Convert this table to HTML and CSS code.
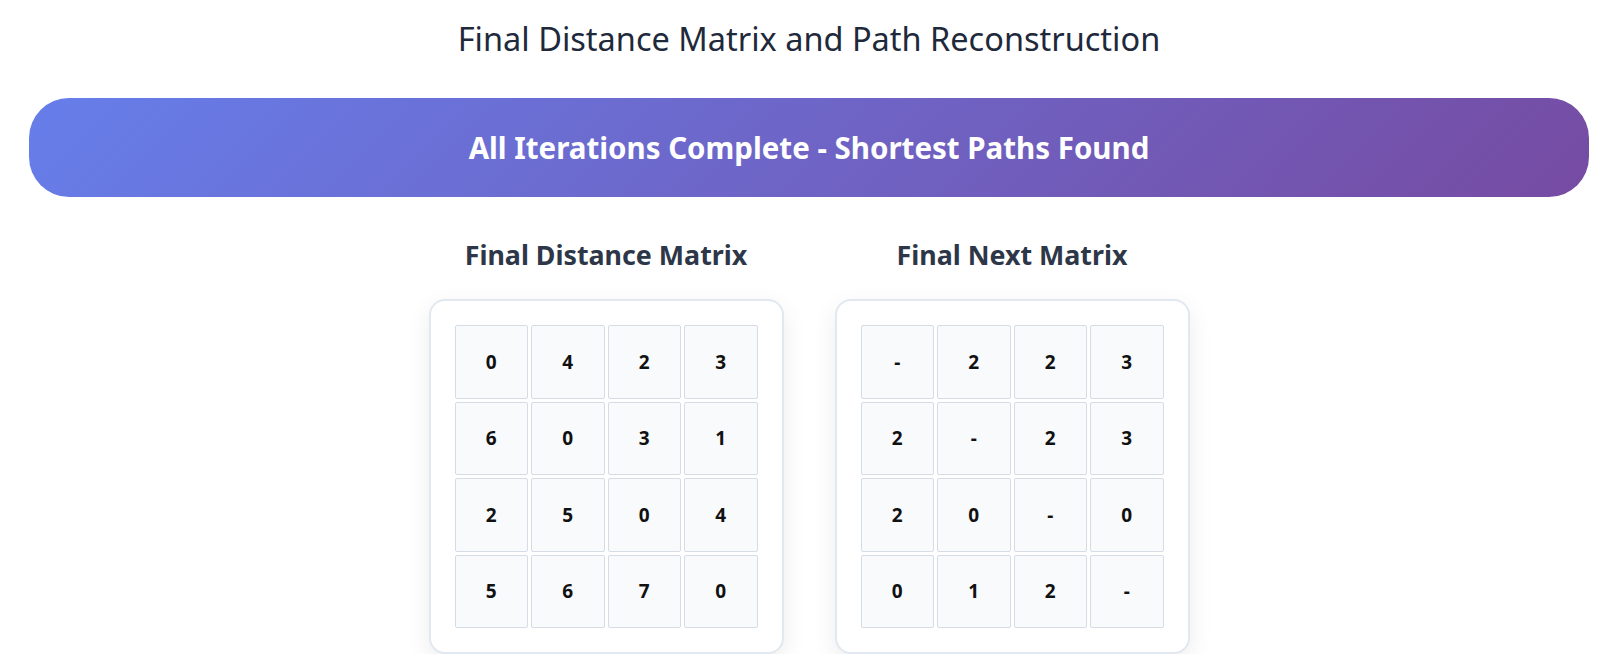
FILE: index.html
```html
<!DOCTYPE html>
<html lang="en">
<head>
    <meta charset="UTF-8">
    <meta name="viewport" content="width=device-width, initial-scale=1.0">
    <title>Final Distance Matrix and Path Reconstruction</title>
    <link rel="stylesheet" href="styles.css">
</head>
<body>
    <div class="page">
        <h1 class="page-title">Final Distance Matrix and Path Reconstruction</h1>

        <div class="status-banner">All Iterations Complete - Shortest Paths Found</div>

        <div class="matrices">
            <div class="matrix-block">
                <h3>Final Distance Matrix</h3>
                <div class="matrix-card">
                    <div class="matrix-grid">
                        <div class="cell">0</div>
                        <div class="cell">4</div>
                        <div class="cell">2</div>
                        <div class="cell">3</div>
                        <div class="cell">6</div>
                        <div class="cell">0</div>
                        <div class="cell">3</div>
                        <div class="cell">1</div>
                        <div class="cell">2</div>
                        <div class="cell">5</div>
                        <div class="cell">0</div>
                        <div class="cell">4</div>
                        <div class="cell">5</div>
                        <div class="cell">6</div>
                        <div class="cell">7</div>
                        <div class="cell">0</div>
                    </div>
                </div>
            </div>

            <div class="matrix-block">
                <h3>Final Next Matrix</h3>
                <div class="matrix-card">
                    <div class="matrix-grid">
                        <div class="cell">-</div>
                        <div class="cell">2</div>
                        <div class="cell">2</div>
                        <div class="cell">3</div>
                        <div class="cell">2</div>
                        <div class="cell">-</div>
                        <div class="cell">2</div>
                        <div class="cell">3</div>
                        <div class="cell">2</div>
                        <div class="cell">0</div>
                        <div class="cell">-</div>
                        <div class="cell">0</div>
                        <div class="cell">0</div>
                        <div class="cell">1</div>
                        <div class="cell">2</div>
                        <div class="cell">-</div>
                    </div>
                </div>
            </div>
        </div>
    </div>
</body>
</html>
```
FILE: styles.css
```css
body {
    margin: 0;
    font-family: "Noto Sans", "Open Sans", sans-serif;
    background: #ffffff;
    color: #2d3748;
}
.page {
    padding: 0 11px 0 29px;
}
.page-title {
    margin: 16px 0 37px;
    font-size: 32.5px;
    font-weight: 400;
    text-align: center;
    color: #1e293b;
}
.status-banner {
    padding: 29px 20px;
    border-radius: 40px;
    background: linear-gradient(135deg, #667eea 0%, #764ba2 100%);
    color: white;
    font-size: 29.5px;
    font-weight: 700;
    text-align: center;
}
.matrices {
    display: flex;
    justify-content: center;
    gap: 51px;
    margin-top: 39px;
}
.matrix-block h3 {
    margin: 0 0 26px;
    font-size: 26.8px;
    font-weight: 700;
    text-align: center;
    color: #2d3748;
}
.matrix-card {
    background: white;
    border: 2px solid #e2e8f0;
    border-radius: 16px;
    padding: 24px;
    box-shadow: 0 8px 25px rgba(0, 0, 0, 0.08);
}
.matrix-grid {
    display: grid;
    grid-template-columns: repeat(4, 73.5px);
    grid-auto-rows: 73.5px;
    gap: 3px;
}
.cell {
    display: flex;
    align-items: center;
    justify-content: center;
    background: #f8fafc;
    border: 1px solid #d5dce6;
    border-radius: 2px;
    font-size: 19px;
    font-weight: 700;
    color: #111;
}
```
